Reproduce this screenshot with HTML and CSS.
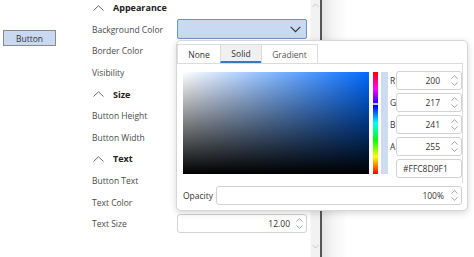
FILE: index.html
```html
<!DOCTYPE html>
<html>
<head>
<meta charset="utf-8">
<link rel="stylesheet" href="styles.css">
</head>
<body>
<div class="app">
  <div class="preview">
    <div class="preview-btn">Button</div>
  </div>
  <div class="props">
    <div class="row heading">
      <svg class="chev" width="11" height="6" viewBox="0 0 11 6"><path d="M0.5 5.5 L5.5 0.8 L10.5 5.5" fill="none" stroke="#666" stroke-width="1"/></svg>
      <span>Appearance</span>
    </div>
    <div class="row">
      <span class="label">Background Color</span>
      <div class="combo">
        <svg width="11" height="7" viewBox="0 0 11 7"><path d="M0.7 0.8 L5.5 5.6 L10.3 0.8" fill="none" stroke="#333" stroke-width="1.2"/></svg>
      </div>
    </div>
    <div class="row"><span class="label">Border Color</span></div>
    <div class="row"><span class="label">Visibility</span></div>
    <div class="row heading">
      <svg class="chev" width="11" height="6" viewBox="0 0 11 6"><path d="M0.5 5.5 L5.5 0.8 L10.5 5.5" fill="none" stroke="#666" stroke-width="1"/></svg>
      <span>Size</span>
    </div>
    <div class="row"><span class="label">Button Height</span></div>
    <div class="row"><span class="label">Button Width</span></div>
    <div class="row heading">
      <svg class="chev" width="11" height="6" viewBox="0 0 11 6"><path d="M0.5 5.5 L5.5 0.8 L10.5 5.5" fill="none" stroke="#666" stroke-width="1"/></svg>
      <span>Text</span>
    </div>
    <div class="row"><span class="label">Button Text</span></div>
    <div class="row"><span class="label">Text Color</span></div>
    <div class="row">
      <span class="label">Text Size</span>
      <div class="field num size-field">
        <span class="val">12.00</span>
        <span class="spin"><svg width="7" height="11" viewBox="0 0 7 11"><path d="M0.5 3.5 L3.5 0.7 L6.5 3.5 M0.5 7.5 L3.5 10.3 L6.5 7.5" fill="none" stroke="#999" stroke-width="0.9"/></svg></span>
      </div>
    </div>
  </div>
  <div class="scrollbar">
    <svg width="7" height="5" viewBox="0 0 7 5"><path d="M0.5 4 L3.5 1 L6.5 4" fill="none" stroke="#c4c4c4" stroke-width="0.9"/></svg>
    <svg width="7" height="5" viewBox="0 0 7 5"><path d="M0.5 1 L3.5 4 L6.5 1" fill="none" stroke="#c4c4c4" stroke-width="0.9"/></svg>
  </div>
  <div class="divider"></div>
  <div class="shade"></div>
</div>

<div class="popup">
  <div class="tabs">
    <div class="tab tab-none">None</div>
    <div class="tab tab-solid active">Solid</div>
    <div class="tab tab-grad">Gradient</div>
  </div>
  <div class="panel">
    <div class="sv"></div>
    <div class="hue"><div class="hue-mark"></div></div>
    <div class="alpha"></div>
    <div class="channels">
      <span class="ch-label">R</span>
      <div class="field num ch-field">
        <span class="val">200</span>
        <span class="spin"><svg width="7" height="11" viewBox="0 0 7 11"><path d="M0.5 3.5 L3.5 0.7 L6.5 3.5 M0.5 7.5 L3.5 10.3 L6.5 7.5" fill="none" stroke="#999" stroke-width="0.9"/></svg></span>
      </div>
      <span class="ch-label">G</span>
      <div class="field num ch-field">
        <span class="val">217</span>
        <span class="spin"><svg width="7" height="11" viewBox="0 0 7 11"><path d="M0.5 3.5 L3.5 0.7 L6.5 3.5 M0.5 7.5 L3.5 10.3 L6.5 7.5" fill="none" stroke="#999" stroke-width="0.9"/></svg></span>
      </div>
      <span class="ch-label">B</span>
      <div class="field num ch-field">
        <span class="val">241</span>
        <span class="spin"><svg width="7" height="11" viewBox="0 0 7 11"><path d="M0.5 3.5 L3.5 0.7 L6.5 3.5 M0.5 7.5 L3.5 10.3 L6.5 7.5" fill="none" stroke="#999" stroke-width="0.9"/></svg></span>
      </div>
      <span class="ch-label">A</span>
      <div class="field num ch-field">
        <span class="val">255</span>
        <span class="spin"><svg width="7" height="11" viewBox="0 0 7 11"><path d="M0.5 3.5 L3.5 0.7 L6.5 3.5 M0.5 7.5 L3.5 10.3 L6.5 7.5" fill="none" stroke="#999" stroke-width="0.9"/></svg></span>
      </div>
      <span class="ch-label"></span>
      <div class="field hex">#FFC8D9F1</div>
    </div>
  </div>
  <div class="opacity-row">
    <span class="op-label">Opacity</span>
    <div class="field num op-field">
      <span class="val">100%</span>
      <span class="spin"><svg width="7" height="11" viewBox="0 0 7 11"><path d="M0.5 3.5 L3.5 0.7 L6.5 3.5 M0.5 7.5 L3.5 10.3 L6.5 7.5" fill="none" stroke="#999" stroke-width="0.9"/></svg></span>
    </div>
  </div>
</div>
</body>
</html>
```

FILE: styles.css
```css
* { box-sizing: border-box; }
html, body {
  margin: 0;
  padding: 0;
  width: 474px;
  height: 257px;
  overflow: hidden;
  background: #ffffff;
  font-family: "Open Sans", "Noto Sans", sans-serif;
  font-size: 8.5px;
  color: #4a4a4a;
}
.app {
  display: flex;
  height: 257px;
}
.preview {
  width: 88px;
  padding-top: 30px;
  padding-left: 3px;
}
.preview-btn {
  width: 53px;
  height: 16px;
  background: #c8d9f1;
  border: 1px solid #8a8a8a;
  display: flex;
  align-items: center;
  justify-content: center;
  color: #333;
  font-size: 8.5px;
}
.props {
  width: 222px;
  padding-left: 4px;
  margin-top: -3px;
  display: flex;
  flex-direction: column;
}
.row {
  height: 21.6px;
  flex: none;
  display: grid;
  grid-template-columns: 85px 130px;
  align-items: center;
}
.row.heading {
  display: flex;
  align-items: center;
  font-weight: 700;
  color: #222;
  font-size: 9px;
}
.chev {
  margin-left: 1px;
  margin-right: 9px;
}
.label {
  white-space: nowrap;
}
.combo {
  height: 20px;
  background: #c8d9f1;
  border: 1px solid #6f93c2;
  border-radius: 2px;
  display: flex;
  align-items: center;
  justify-content: flex-end;
  padding-right: 5px;
}
.field {
  height: 19px;
  border: 1px solid #d2d2d2;
  border-radius: 3px;
  background: #fff;
  display: flex;
  align-items: center;
  color: #333;
}
.field.num {
  justify-content: flex-end;
  padding-right: 3px;
}
.field .val {
  margin-right: 8px;
}
.ch-field .val { margin-right: 11px; }
.field .spin {
  display: flex;
  align-items: center;
}
.size-field .val { margin-right: 6px; }
.scrollbar {
  width: 10px;
  background: #f2f2f2;
  border-left: 1px solid #f8f8f8;
  display: flex;
  flex-direction: column;
  justify-content: space-between;
  align-items: center;
  padding: 3px 0 8px;
}
.divider {
  width: 1.5px;
  background: #555;
}
.shade {
  flex: 1;
  background: linear-gradient(to right, #e4e4e4, #f6f6f6 12px, #ffffff 26px);
}

/* popup overlay */
.popup {
  position: absolute;
  left: 176px;
  top: 40px;
  width: 292px;
  height: 171px;
  background: #fff;
  border: 1px solid #d6d6d6;
  border-radius: 5px;
  box-shadow: 0 2px 7px rgba(0, 0, 0, 0.16);
  display: flex;
  flex-direction: column;
}
.tabs {
  display: flex;
  margin-top: 3px;
  height: 19px;
}
.tab {
  height: 19px;
  border: 1px solid #dcdcdc;
  border-bottom: none;
  display: flex;
  align-items: center;
  justify-content: center;
  color: #333;
}
.tab + .tab { margin-left: -1px; }
.tab-none { width: 44px; }
.tab-solid { width: 42px; }
.tab-grad { width: 57px; color: #555; }
.tab.active {
  background: #f0f0f0;
  border-bottom: 2px solid #3b78bd;
}
.panel {
  width: 286px;
  height: 120px;
  border-top: 1px solid #dcdcdc;
  border-right: 1px solid #dcdcdc;
  display: flex;
  align-items: flex-start;
  padding: 8px 0 0 6px;
}
.sv {
  width: 186px;
  height: 102px;
  background:
    linear-gradient(to top, #000 0%, rgba(0,0,0,0) 100%),
    linear-gradient(to right, #ffffff 0%, #006aff 100%);
}
.hue {
  position: relative;
  width: 5px;
  height: 102px;
  margin-left: 4px;
  background: linear-gradient(to bottom, #ff0000 0%, #ff00ff 16.6%, #0000ff 33.3%, #00ffff 50%, #00ff00 66.6%, #ffff00 83.3%, #ff0000 100%);
}
.hue-mark {
  position: absolute;
  left: 0;
  right: 0;
  top: 31px;
  height: 2px;
  background: #b8c8e0;
}
.alpha {
  width: 7px;
  height: 102px;
  margin-left: 3px;
  background:
    linear-gradient(rgba(200,217,241,0.85), rgba(200,217,241,0.85)),
    repeating-conic-gradient(#d8d8d8 0% 25%, #ffffff 0% 50%) 0 0 / 3px 3px;
}
.channels {
  margin-left: 2px;
  margin-top: -1px;
  display: grid;
  grid-template-columns: 6px 66px;
  row-gap: 3px;
  align-items: center;
}
.ch-label {
  color: #333;
  font-size: 8.5px;
}
.field.hex {
  padding-left: 6px;
}
.opacity-row {
  display: flex;
  align-items: center;
  margin-top: 3px;
  padding-left: 6px;
}
.op-label {
  width: 33px;
  color: #333;
}
.op-field {
  width: 246px;
}
.op-field .val { margin-right: 7px; }
```
